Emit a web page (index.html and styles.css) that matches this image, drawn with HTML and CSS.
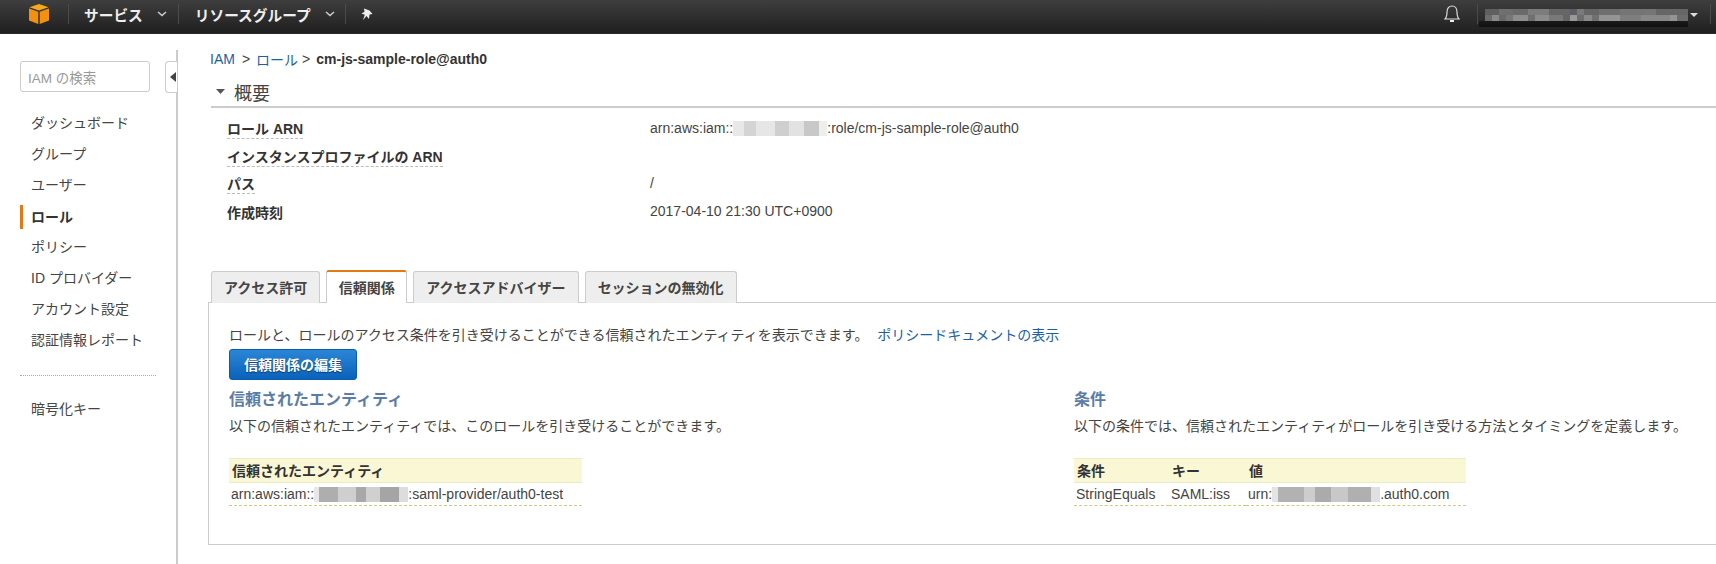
FILE: index.html
```html
<!DOCTYPE html>
<html lang="ja">
<head>
<meta charset="utf-8">
<title>IAM ロール</title>
<link rel="stylesheet" href="styles.css">
</head>
<body>
<header class="topbar">
  <div class="brand">
    <svg class="cube" width="20" height="20" viewBox="0 0 20 20"><path d="M10 0 19.500 3.200 10 6.500 .5 3.200Z" fill="#f7a81b"/><path d="M0 4.500 9.300 7.700V20L0 16.500Z" fill="#f29111"/><path d="M20 4.500 10.700 7.700V20L20 16.500Z" fill="#f29111"/></svg>
  </div>
  <div class="menu"><span>サービス</span><svg class="chev" width="10" height="6" viewBox="0 0 10 6"><path d="M1 1 5 4.500 9 1" fill="none" stroke="#ccc" stroke-width="1.600"/></svg></div>
  <div class="menu group"><span>リソースグループ</span><svg class="chev" width="10" height="6" viewBox="0 0 10 6"><path d="M1 1 5 4.500 9 1" fill="none" stroke="#ccc" stroke-width="1.600"/></svg></div>
  <div class="pin"><svg width="12" height="13" viewBox="0 0 12 13"><path d="M3 .5 8.500 2.500 11.500 6 8.500 6.500 8 11 5.500 8 2 12 3.800 6.800 .5 5.500 3.500 3.800Z" fill="#eee"/></svg></div>
  <div class="spacer"></div>
  <div class="bell"><svg width="16" height="18" viewBox="0 0 16 18"><path d="M1 14C3 12 3 10 3 7 3 3.500 5 1 8 1S13 3.500 13 7C13 10 13 12 15 14Z" fill="none" stroke="#ddd" stroke-width="1.200"/><path d="M6 15H10V17H6Z" fill="#eee"/></svg></div>
  <div class="account">
    <div class="mosaic-user"></div>
    <svg class="caret" width="8" height="4" viewBox="0 0 8 4"><path d="M0 0H8L4 4Z" fill="#ddd"/></svg>
  </div>
</header>

<div class="layout">
  <aside class="sidebar">
    <div class="search">IAM の検索</div>
    <div class="collapse"><svg width="6" height="10" viewBox="0 0 6 10"><path d="M6 0V10L0 5Z" fill="#444"/></svg></div>
    <nav class="nav">
      <a>ダッシュボード</a>
      <a>グループ</a>
      <a>ユーザー</a>
      <a class="active">ロール</a>
      <a>ポリシー</a>
      <a>ID プロバイダー</a>
      <a>アカウント設定</a>
      <a>認証情報レポート</a>
    </nav>
    <div class="divider"></div>
    <nav class="nav"><a>暗号化キー</a></nav>
  </aside>

  <main class="main">
    <div class="crumbs"><a>IAM</a><span class="sep">&gt;</span><a>ロール</a><span class="sep">&gt;</span><strong>cm-js-sample-role@auth0</strong></div>

    <h2 class="section"><svg width="9" height="5" viewBox="0 0 9 5"><path d="M0 0H9L4.500 5Z" fill="#555"/></svg><span>概要</span></h2>

    <dl class="summary">
      <dt><span class="dash">ロール ARN</span></dt>
      <dd>arn:aws:iam::<span class="mosaic m-arn"></span>:role/cm-js-sample-role@auth0</dd>
      <dt><span class="dash">インスタンスプロファイルの ARN</span></dt>
      <dd></dd>
      <dt><span class="dash">パス</span></dt>
      <dd>/</dd>
      <dt>作成時刻</dt>
      <dd>2017-04-10 21:30 UTC+0900</dd>
    </dl>

    <div class="tabs">
      <div class="tab">アクセス許可</div>
      <div class="tab on">信頼関係</div>
      <div class="tab">アクセスアドバイザー</div>
      <div class="tab">セッションの無効化</div>
    </div>

    <section class="panel">
      <p class="intro">ロールと、ロールのアクセス条件を引き受けることができる信頼されたエンティティを表示できます。 <a>ポリシードキュメントの表示</a></p>
      <button class="btn">信頼関係の編集</button>
      <div class="cols">
        <div class="col-left">
          <h3>信頼されたエンティティ</h3>
          <p class="desc">以下の信頼されたエンティティでは、このロールを引き受けることができます。</p>
          <table class="t t-left">
            <tr><th>信頼されたエンティティ</th></tr>
            <tr><td>arn:aws:iam::<span class="mosaic m-prov"></span>:saml-provider/auth0-test</td></tr>
          </table>
        </div>
        <div class="col-right">
          <h3>条件</h3>
          <p class="desc">以下の条件では、信頼されたエンティティがロールを引き受ける方法とタイミングを定義します。</p>
          <table class="t t-right">
            <tr><th class="c1">条件</th><th class="c2">キー</th><th>値</th></tr>
            <tr><td>StringEquals</td><td>SAML:iss</td><td>urn:<span class="mosaic m-urn"></span>.auth0.com</td></tr>
          </table>
        </div>
      </div>
    </section>
  </main>
</div>
</body>
</html>
```
FILE: styles.css
```css
* { box-sizing: border-box; }
html, body { margin: 0; padding: 0; }
body {
  width: 1716px;
  height: 564px;
  overflow: hidden;
  background: #fff;
  color: #444;
  font-family: "Liberation Sans", "Noto Sans CJK JP", sans-serif;
  font-size: 14px;
}
a { color: #1b5fa8; text-decoration: none; }

.topbar {
  display: flex;
  align-items: center;
  height: 34px;
  padding-bottom: 5px;
  background: linear-gradient(#3e3e3e, #1f1f1f);
  border-bottom: 1px solid #2a2a2a;
  color: #eee;
}
.brand {
  display: flex;
  align-items: center;
  justify-content: center;
  width: 69px;
  height: 20px;
  padding-left: 10px;
  border-right: 1px solid #4a4a4a;
}
.menu {
  display: flex;
  align-items: center;
  gap: 14px;
  height: 20px;
  padding: 0 11px 0 15px;
  border-right: 1px solid #4a4a4a;
  font-size: 14.700px;
  font-weight: 700;
}
.menu.group { padding: 0 10px 0 16px; }
.pin { display: flex; padding-left: 15px; }
.spacer { flex: 1; }
.bell { display: flex; padding-right: 17px; }
.account {
  display: flex;
  align-items: flex-start;
  width: 234px;
  height: 20px;
  margin-right: 5px;
  border-left: 1px solid #4a4a4a;
  border-right: 1px solid #4a4a4a;
}
.mosaic-user {
  width: 209px;
  height: 18px;
  margin: 5px 0 0 1px;
  background:
    linear-gradient(90deg, #6c6c6c 0 3.500%, #8a8a8a 3.500% 7%, #6a6a6a 7% 10.500%, #777 10.500% 14%, #8e8e8e 14% 21%, #6f6f6f 21% 24.500%, #8c8c8c 24.500% 31.500%, #797979 31.500% 38.500%, #666 38.500% 42%, #9a9a9a 42% 45.500%, #6e6e6e 45.500% 49%, #8a8a8a 49% 52.500%, #707070 52.500% 56%, #959595 56% 66.500%, #7e7e7e 66.500% 77%, #888 77% 91%, #949494 91% 94.500%, #6c6c6c 94.500% 100%) right 6px / 203px 6px no-repeat,
    linear-gradient(90deg, #5f5f5f 0 7%, #6f6f6f 7% 14%, #6a6a6a 14% 21%, #7c7c7c 21% 31.500%, #666 31.500% 42%, #5c5f66 42% 45.500%, #7a7a7a 45.500% 49%, #666 49% 56%, #6f6f6f 56% 66.500%, #757575 66.500% 84%, #666 84% 100%) right 0 / 203px 6px no-repeat,
    linear-gradient(#1a1a1a, #111) 0 12px / 100% 6px no-repeat;
}
.caret { margin: 9px 0 0 2px; }

.layout { display: flex; height: 530px; }

.sidebar {
  position: relative;
  flex: none;
  width: 178px;
  padding: 11px 0 0 20px;
  border-right: 2px solid #ccc;
  margin-top: 16px;
}
.search {
  display: flex;
  align-items: center;
  width: 130px;
  height: 31px;
  padding-left: 7px;
  border: 1px solid #ccc;
  border-radius: 3px;
  font-size: 13.500px;
  color: #999;
}
.collapse {
  position: absolute;
  left: 165px;
  top: 11px;
  display: flex;
  align-items: center;
  justify-content: center;
  width: 12px;
  height: 32px;
  padding-left: 2px;
  border: 1px solid #ccc;
  border-right: 0;
  border-radius: 4px 0 0 4px;
  background: #fff;
}
.nav { display: flex; flex-direction: column; }
.nav:first-of-type { margin-top: 16px; }
.nav a {
  display: block;
  height: 31px;
  line-height: 31px;
  padding-left: 11px;
  font-size: 14px;
  color: #444;
}
.nav a.active {
  font-weight: 700;
  color: #333;
  padding-left: 8px;
  border-left: 3px solid #e47911;
  height: 24px;
  line-height: 24px;
  margin: 4px 0 3px;
}
.divider {
  width: 136px;
  margin: 19px 0 18px;
  border-top: 1px dotted #aaa;
}

.main { flex: 1; min-width: 0; padding: 15px 0 0 32px; }
.crumbs { display: flex; align-items: center; height: 20px; font-size: 14px; color: #444; }
.crumbs .sep { margin: 0 6px 0 7px; }
.crumbs .sep:nth-of-type(2) { margin: 0 6px 0 4px; }
.crumbs strong { color: #333; }
.section {
  display: flex;
  align-items: center;
  gap: 9px;
  height: 29px;
  margin: 10px 0 0 1px;
  padding: 0 0 2px 5px;
  border-bottom: 2px solid #ccc;
  font-size: 18px;
  font-weight: 400;
  color: #444;
}
.summary {
  display: grid;
  grid-template-columns: 423px 1fr;
  margin: 7px 0 0 17px;
  font-size: 14px;
}
.summary dt, .summary dd { margin: 0; height: 27.600px; display: flex; align-items: center; }
.summary dt { font-weight: 700; color: #333; }
.summary dd { color: #444; display: block; line-height: 27.600px; }
.dash { border-bottom: 1px dashed #bbb; }
.mosaic { display: inline-block; vertical-align: -3px; height: 15px; }
.m-arn {
  width: 94px;
  background: linear-gradient(90deg, #e8e8e8 0 12%, #d4d4d4 12% 25%, #e6e6e6 25% 45%, #cfcfcf 45% 60%, #e2e2e2 60% 75%, #c8c8c8 75% 92%, #eee 92% 100%);
}
.tabs {
  display: flex;
  gap: 6px;
  margin: 44.600px 0 -1px 1px;
  height: 33px;
  position: relative;
}
.tab {
  height: 32px;
  margin-top: 1px;
  padding: 0 12px;
  line-height: 32px;
  background: #eee;
  border: 1px solid #ccc;
  border-bottom: 0;
  border-radius: 3px 3px 0 0;
  font-size: 14px;
  font-weight: 700;
  color: #444;
}
.tab.on {
  height: 33px;
  margin-top: 0;
  padding: 0 11.500px;
  background: #fff;
  border-top: 2px solid #e47911;
}
.panel {
  height: 243px;
  margin-left: -2px;
  padding: 22px 0 0 20px;
  border: 1px solid #ccc;
  border-right: 0;
}
.intro { margin: 0; height: 20px; line-height: 20px; font-size: 14px; white-space: nowrap; }
.intro a { margin-left: 5px; }
.btn {
  display: block;
  width: 128px;
  height: 31px;
  margin: 4px 0 0 0;
  padding: 0;
  border: 1px solid #0a5cae;
  border-radius: 3px;
  background: linear-gradient(#2b86d6, #0a62bb);
  color: #fff;
  font: 700 14px "Liberation Sans", "Noto Sans CJK JP", sans-serif;
  text-shadow: 0 1px 1px rgba(0, 0, 0, .5);
}
.cols { display: flex; margin-top: 9px; }
.col-left { flex: none; width: 845px; }
.col-right { flex: none; }
h3 { margin: 0; height: 22px; line-height: 22px; font-size: 16px; font-weight: 700; color: #5a7ca8; }
.desc { margin: 5px 0 0; height: 20px; line-height: 20px; font-size: 14px; white-space: nowrap; }
.t { border-collapse: collapse; margin-top: 22px; font-size: 14px; }
.t th {
  height: 24px;
  padding: 0 3px;
  text-align: left;
  background: #faf7d4;
  border-top: 1px solid #ececc4;
  border-bottom: 1px solid #ececc4;
  color: #333;
  font-weight: 700;
}
.t-left, .t-right { table-layout: fixed; }
.t-left { width: 353px; }
.t-right { width: 392px; }
.t td {
  height: 23px;
  padding: 0 2px;
  border-bottom: 1px dashed #cfcb7c;
  color: #444;
  white-space: nowrap;
}
.c1 { width: 95px; }
.c2 { width: 77px; }
.m-prov {
  width: 94px;
  background: linear-gradient(90deg, #e8e8e8 0 5%, #aeaeae 5% 25%, #cfcfcf 25% 45%, #a8a8a8 45% 55%, #d0d0d0 55% 70%, #a5a5a5 70% 90%, #ddd 90% 100%);
}
.m-urn {
  width: 108px;
  background: linear-gradient(90deg, #e4e4e4 0 6%, #b2b2b2 6% 30%, #cdcdcd 30% 40%, #ababab 40% 55%, #c8c8c8 55% 70%, #b0b0b0 70% 92%, #e0e0e0 92% 100%);
}
```
